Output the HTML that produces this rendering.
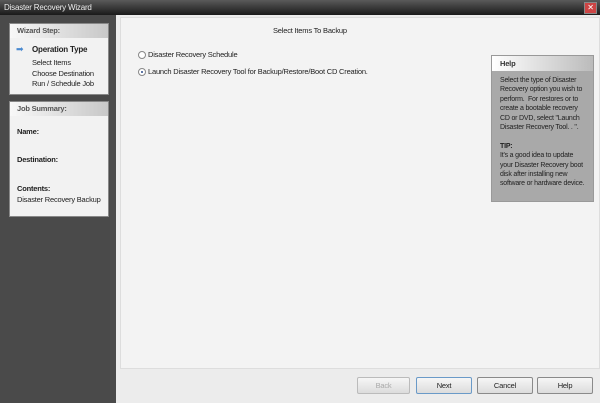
<!DOCTYPE html>
<html><head><style>
body{margin:0;width:600px;height:403px;overflow:hidden;background:#444;font-family:"Liberation Sans",sans-serif;font-size:7.5px;letter-spacing:-0.2px;color:#222;position:relative}
.abs{position:absolute}
.title{left:0;top:0;width:600px;height:15px;background:linear-gradient(#5a5a5a,#1a1a1a);color:#eee;font-size:8px;line-height:15px;padding-left:4px;box-sizing:border-box}
.close{right:3px;top:2px;width:11px;height:10px;background:#c44;border:1px solid #888;color:#fff;font-size:8px;line-height:10px;text-align:center}
.left{left:0;top:15px;width:116px;height:388px;background:#4a4a4a}
.box{left:9px;width:98px;background:#f2f2f2;border:1px solid #888}
.bh{height:14px;background:linear-gradient(90deg,#f8f8f8,#c8c8c8);color:#555;font-weight:bold;line-height:14px;padding-left:7px}
.main{left:116px;top:15px;width:484px;height:388px;background:#ececec}
.panel{left:120px;top:17px;width:478px;height:350px;background:#f3f3f3;border:1px solid #ddd}
.btn{top:377px;height:15px;border:1px solid #8a8a8a;background:linear-gradient(#f6f6f6,#dcdcdc);text-align:center;line-height:15px;border-radius:2px}
.radio{width:6px;height:6px;border:1px solid #888;border-radius:50%;background:#fff}
</style></head><body>
<div class="abs title">Disaster Recovery Wizard</div>
<div class="abs close">✕</div>
<div class="abs left"></div>
<div class="abs box" style="top:23px;height:70px">
 <div class="bh">Wizard Step:</div>
 <div style="position:absolute;left:6px;top:20px;color:#4a8ad0;font-size:9px">➡</div>
 <div style="position:absolute;left:22px;top:21px;font-weight:bold;font-size:8px">Operation Type</div>
 <div style="position:absolute;left:22px;top:34px;line-height:10.5px">Select Items<br>Choose Destination<br>Run / Schedule Job</div>
</div>
<div class="abs box" style="top:101px;height:114px">
 <div class="bh">Job Summary:</div>
 <div style="position:absolute;left:7px;top:25px;font-weight:bold">Name:</div>
 <div style="position:absolute;left:7px;top:53px;font-weight:bold">Destination:</div>
 <div style="position:absolute;left:7px;top:82px;font-weight:bold">Contents:</div>
 <div style="position:absolute;left:7px;top:93px;white-space:nowrap">Disaster Recovery Backup</div>
</div>
<div class="abs main"></div>
<div class="abs panel"></div>
<div class="abs" style="left:273px;top:26px">Select Items To Backup</div>
<div class="abs radio" style="left:138px;top:51px"></div>
<div class="abs" style="left:148px;top:50px">Disaster Recovery Schedule</div>
<div class="abs radio" style="left:138px;top:68px"><div style="width:2px;height:2px;margin:2px;border-radius:50%;background:#2a4a8a"></div></div>
<div class="abs" style="left:148px;top:67px">Launch Disaster Recovery Tool for Backup/Restore/Boot CD Creation.</div>
<div class="abs" style="left:491px;top:55px;width:101px;height:145px;background:#a9a9a9;border:1px solid #999">
 <div style="height:15px;background:linear-gradient(90deg,#fff,#bbb);font-weight:bold;line-height:15px;padding-left:8px;color:#333">Help</div>
 <div style="padding:5px 8px 0 8px;line-height:9.4px;color:#222;font-size:7px">Select the type of Disaster Recovery option you wish to perform.&nbsp; For restores or to create a bootable recovery CD or DVD, select "Launch Disaster Recovery Tool. . ".<br><br><b>TIP:</b><br>It's a good idea to update your Disaster Recovery boot disk after installing new software or hardware device.</div>
</div>
<div class="abs btn" style="left:357px;width:51px;color:#aaa;border-color:#bbb">Back</div>
<div class="abs btn" style="left:416px;width:54px;border-color:#6a9ac8">Next</div>
<div class="abs btn" style="left:477px;width:54px">Cancel</div>
<div class="abs btn" style="left:537px;width:54px">Help</div>
</body></html>
